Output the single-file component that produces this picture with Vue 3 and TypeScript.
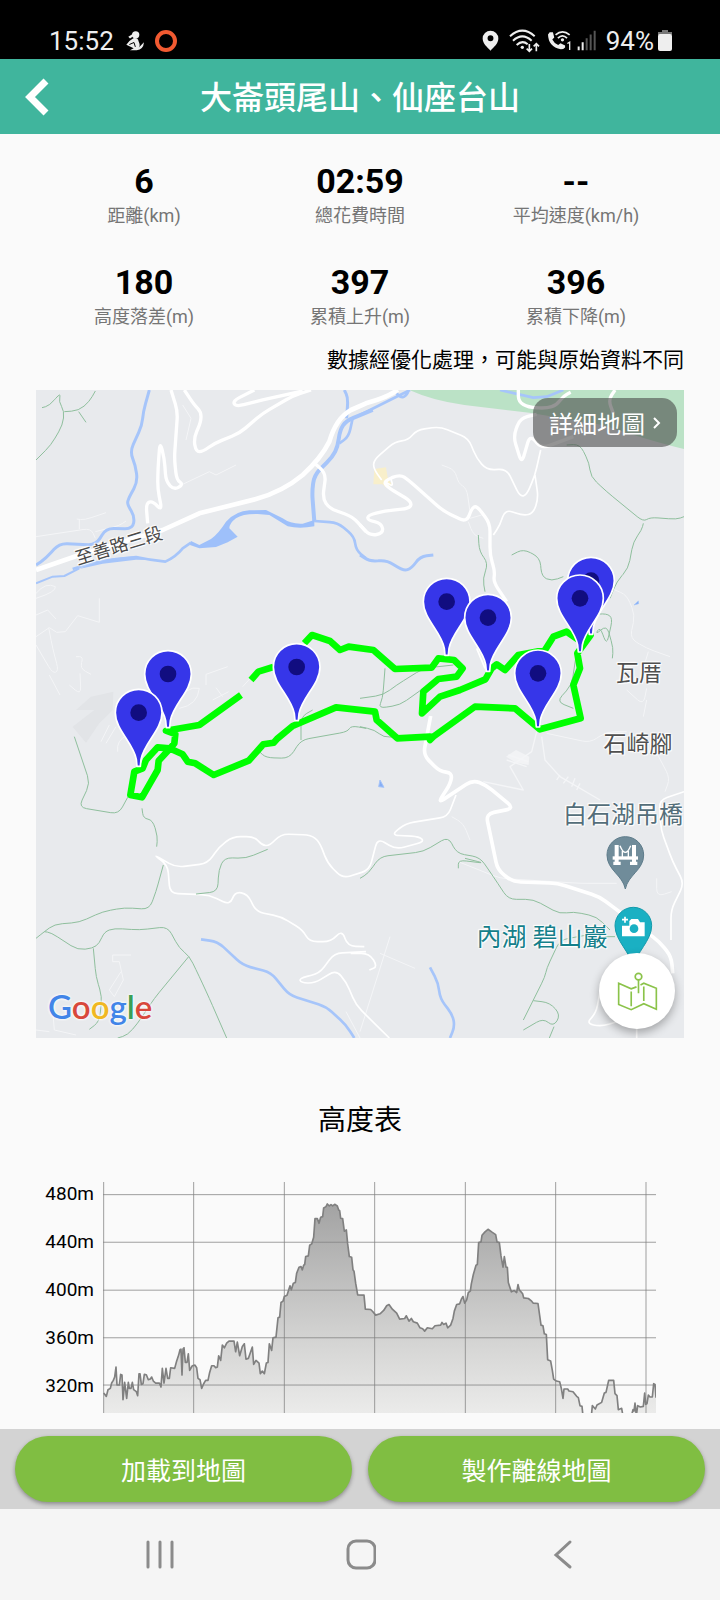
<script setup lang="ts">
interface Stat {
  value: string
  label: string
}

interface PlaceLabel {
  text: string
  x: number
  y: number
  kind: string
}

type Point = [number, number]

const stats: Stat[] = [
  { value: '6', label: '距離(km)' },
  { value: '02:59', label: '總花費時間' },
  { value: '--', label: '平均速度(km/h)' },
  { value: '180', label: '高度落差(m)' },
  { value: '397', label: '累積上升(m)' },
  { value: '396', label: '累積下降(m)' },
]

/* Map positions are given on a 648 x 648 tile. */
const tileSize = 648
const places: PlaceLabel[] = [
  { text: '至善路三段', x: 83, y: 156, kind: 'road' },
  { text: '瓦厝', x: 603, y: 284, kind: 'village' },
  { text: '石崎腳', x: 602, y: 355, kind: 'village' },
  { text: '白石湖吊橋', x: 587, y: 425, kind: 'bridge' },
  { text: '內湖 碧山巖', x: 506, y: 548, kind: 'temple' },
]

const percent = (value: number): string => `${(value / tileSize) * 100}%`

/* Rounds the corners of every M/L/H/V polyline in a path; curves and closed shapes stay as they are. */
const smooth = (d: string, radius = 24): string =>
  (d.match(/M[^M]*/g) ?? []).map((part) => {
    if (/[QZ]/.test(part)) return part
    const points: Point[] = []
    for (const step of part.match(/[MLHV][^MLHV]*/g) ?? []) {
      const numbers = (step.match(/-?\d+/g) ?? []).map(Number)
      const last = points[points.length - 1]
      if (step[0] === 'H') points.push([numbers[0], last[1]])
      else if (step[0] === 'V') points.push([last[0], numbers[0]])
      else for (let i = 0; i + 1 < numbers.length; i += 2) points.push([numbers[i], numbers[i + 1]])
    }
    const towards = (a: Point, b: Point): string => {
      const length = Math.hypot(b[0] - a[0], b[1] - a[1]) || 1
      const t = Math.min(radius / length, 0.5)
      return `${a[0] + (b[0] - a[0]) * t} ${a[1] + (b[1] - a[1]) * t}`
    }
    const inner = points.slice(1, -1).map((p, i) => `L${towards(p, points[i])}Q${p[0]} ${p[1]} ${towards(p, points[i + 2])}`)
    return `M${points[0].join(' ')}${inner.join('')}L${points[points.length - 1].join(' ')}`
  }).join('')

/* Waypoint pins, in map units, from back to front. */
const pins: Point[] = [
  [1665, 572],
  [1632, 625],
  [1232, 635],
  [1356, 683],
  [1506, 850],
  [396, 852],
  [308, 968],
  [782, 831],
]

const brand = [
  { letter: 'G', tone: 'blue' },
  { letter: 'o', tone: 'red' },
  { letter: 'o', tone: 'yellow' },
  { letter: 'g', tone: 'blue' },
  { letter: 'l', tone: 'green' },
  { letter: 'e', tone: 'red' },
]

const heights: string[] = ['480m', '440m', '400m', '360m', '320m']
const gridRows: number[] = [38, 181, 325, 468, 610]
const gridColumns: number[] = [2, 272, 544, 815, 1087, 1358, 1629]

const firstHalf: Point[] = [
  [221, 910], [229, 920], [234, 900], [241, 896], [245, 880], [250, 872], [254, 862], [258, 832], [261, 886], [268, 886],
  [272, 854], [276, 856], [279, 930], [284, 878], [290, 926], [295, 878], [298, 896], [303, 896], [307, 878], [311, 900],
  [319, 906], [323, 918], [327, 852], [330, 852], [334, 884], [339, 882], [343, 854], [349, 855], [355, 870], [361, 868],
  [365, 862], [370, 874], [377, 880], [388, 880], [393, 892], [397, 836], [402, 880], [408, 836], [413, 866], [418, 866],
  [422, 834], [434, 836], [440, 814], [446, 796], [450, 780], [453, 778], [456, 856], [459, 778], [462, 774], [466, 818],
  [471, 818], [475, 792], [479, 842], [487, 828], [495, 826], [500, 834], [504, 866], [510, 870], [515, 896], [521, 882],
  [527, 872], [534, 872], [539, 848], [545, 828], [552, 828], [557, 834], [562, 832], [566, 798], [572, 812], [577, 766],
  [583, 774], [590, 760], [597, 754], [612, 754], [617, 786], [622, 757], [629, 798], [637, 770], [643, 762], [648, 808],
  [655, 806], [667, 772], [671, 824], [678, 812], [687, 820], [691, 852], [697, 844], [703, 852], [709, 820], [714, 818],
  [718, 762], [725, 782], [729, 744], [738, 742], [744, 684], [749, 682], [753, 638], [759, 634], [763, 620], [771, 616],
  [780, 588], [784, 600], [790, 580], [796, 578], [800, 550], [807, 532], [813, 530], [817, 540], [821, 526], [824, 524],
  [827, 500], [835, 498], [839, 466], [845, 462], [851, 442], [855, 386], [862, 386], [867, 400], [872, 382], [878, 380],
  [881, 354], [888, 350], [892, 342], [898, 348], [903, 344], [908, 348], [914, 343], [922, 348], [926, 360], [929, 362],
  [932, 385], [938, 386], [943, 424], [949, 420], [953, 462], [958, 500], [965, 502], [969, 540], [972, 544], [977, 580],
]

const secondHalf: Point[] = [
  [23, 375], [42, 376], [46, 418], [62, 419], [68, 425], [77, 436], [90, 432], [101, 422], [110, 408], [117, 404],
  [127, 418], [140, 430], [149, 448], [164, 446], [169, 438], [177, 454], [184, 446], [190, 456], [202, 460], [210, 474],
  [218, 477], [224, 484], [232, 474], [247, 477], [255, 468], [272, 466], [276, 458], [281, 464], [288, 460], [293, 474],
  [302, 466], [309, 446], [313, 424], [320, 404], [329, 402], [334, 388], [339, 380], [344, 400], [350, 390], [355, 368],
  [361, 364], [364, 342], [370, 314], [378, 286], [382, 284], [386, 218], [393, 216], [396, 196], [405, 186], [414, 178],
  [425, 186], [437, 194], [441, 216], [448, 218], [453, 258], [459, 292], [463, 260], [468, 292], [472, 292], [475, 338],
  [484, 366], [493, 362], [500, 368], [504, 344], [508, 360], [518, 372], [521, 384], [535, 386], [545, 394], [550, 400],
  [564, 401], [573, 466], [579, 468], [583, 492], [589, 494], [593, 570], [602, 574], [607, 602], [611, 628], [619, 634],
  [629, 636], [634, 656], [639, 686], [642, 658], [653, 658], [657, 664], [669, 666], [680, 680], [685, 684], [690, 708],
  [696, 710], [699, 740], [724, 740], [727, 708], [736, 718], [741, 706], [755, 698], [763, 670], [768, 668], [776, 632],
  [791, 632], [795, 672], [801, 678], [805, 720], [815, 716], [819, 740], [844, 740], [849, 720], [852, 724], [855, 700],
  [859, 738], [863, 708], [871, 712], [880, 710], [884, 670], [887, 704], [891, 702], [895, 676], [900, 682], [907, 682],
  [911, 642], [915, 644], [918, 684],
]

const profile: Point[] = [
  ...firstHalf.map(([x, y]): Point => [x - 219, y - 276]),
  ...secondHalf.map(([x, y]): Point => [x + 741, y - 36]),
]
const profileLine = 'M' + profile.map(([x, y]) => `${x} ${y}`).join('L')
const profileArea = `${profileLine}V720H2Z`
</script>

<template>
  <div class="screen" lang="zh-Hant">
    <div class="status">
      <div class="status-group">
        <span>15:52</span>
        <svg class="figure" viewBox="376 90 54 62" aria-hidden="true">
          <g fill="#eee" stroke="none">
            <circle cx="405" cy="104" r="11" />
            <path d="M398 114 Q412 112 414 124 Q420 136 414 143 L424 132 L430 126 Q428 148 408 150 L388 150 L399 144 L377 134 Q386 120 398 114Z" />
            <path d="M383 110 L397 101 L400 107 L388 115Z" />
          </g>
          <path d="M386 133 L400 127 L404 140" fill="none" stroke="#000" stroke-width="3" />
        </svg>
        <svg class="ring" viewBox="0 0 24 24" aria-hidden="true">
          <circle cx="12" cy="12" r="9" fill="none" stroke="#f15a31" stroke-width="4" />
        </svg>
      </div>
      <div class="status-group">
        <svg class="place" viewBox="366 90 52 64" aria-hidden="true">
          <path fill-rule="evenodd" fill="#eee" d="M392 92 A24 24 0 0 1 416 116 C416 132 402 142 392 153 C382 142 368 132 368 116 A24 24 0 0 1 392 92Z M392 106 A9 9 0 1 0 392 124 A9 9 0 1 0 392 106Z" />
        </svg>
        <svg class="wifi" viewBox="446 84 93 72" fill="none" stroke="#eee" stroke-width="6" aria-hidden="true">
          <path d="M449 106 Q486 72 523 106 M458 119 Q486 93 514 119 M469 132 Q486 116 502 130" />
          <circle cx="486" cy="139" r="5" fill="#eee" stroke="none" />
          <path stroke-width="5" d="M507 129V151M499 143L507 151L515 143M528 151V129M520 136L528 128L536 136" />
        </svg>
        <svg class="call" viewBox="558 90 76 64" fill="none" stroke="#eee" aria-hidden="true">
          <path fill="#eee" stroke="none" d="M566 97 L576 97 L580 113 L574 119 Q580 131 592 136 L599 130 L613 137 L613 143 Q608 149 600 149 Q562 142 561 104Z" />
          <path stroke-width="5" d="M584 105 Q605 86 627 105 M591 115 Q605 101 619 115" />
          <circle cx="605" cy="120" r="5" fill="#eee" stroke="none" />
          <path stroke-width="4" d="M620 131L627 127V151" />
        </svg>
        <svg class="signal" viewBox="650 90 60 62" aria-hidden="true">
          <path stroke="#eee" stroke-width="6" d="M655 150V139M667 150V126" />
          <path stroke="#555" stroke-width="6" d="M679 150V114M691 150V103M703 150V92" />
        </svg>
        <span class="charge">94%</span>
        <svg class="battery" viewBox="0 0 14 21" aria-hidden="true">
          <path fill="#777" d="M4 0H10V2H14V5H0V2H4Z" />
          <rect y="4" width="14" height="17" rx="2" fill="#eee" />
        </svg>
      </div>
    </div>

    <header class="bar">
      <button class="back" type="button" aria-label="返回">
        <svg viewBox="0 0 24 38" aria-hidden="true">
          <path d="M21 3L5 19L21 35" fill="none" stroke="#fff" stroke-width="7" />
        </svg>
      </button>
      <h1>大崙頭尾山、仙座台山</h1>
    </header>

    <main>
      <dl class="stats">
        <div v-for="stat in stats" :key="stat.label" class="stat">
          <dt>{{ stat.label }}</dt>
          <dd>{{ stat.value }}</dd>
        </div>
      </dl>
      <p class="note">數據經優化處理，可能與原始資料不同</p>

      <section class="map" aria-label="路線地圖">
        <svg class="tile" viewBox="0 0 1944 1944" aria-hidden="true">
          <rect width="1944" height="1944" fill="#e8eaed" />
          <path d="M1120 0 Q1190 32 1285 45 L1480 68 L1700 105 Q1850 155 1944 177 V0Z" fill="#bbe2c6" />

          <!-- buildings and quarries -->
          <path d="M120 960 L165 920 L232 905 L230 960 L190 1000 L150 1058 L110 1010 L175 960Z" fill="#e2e4e7" />
          <path d="M1015 237 L1050 232 L1055 262 L1068 285 L1050 293 L1040 283 L1012 283Z" fill="#f8efcb" />
          <path d="M1410 1100L1440 1080L1480 1100L1478 1125L1440 1118Z" fill="#f2f3f5" />

          <!-- minor lanes -->
          <g class="lanes">
            <g transform="translate(0,-15)">
              <path :d="smooth('M0 455L165 430L178 460M122 402L145 405L210 383M130 402V432M178 440L250 422L270 408')" />
              <path d="M0 640Q62 620 58 605Q30 590 0 625M0 690L35 675L60 702M0 755L40 728L62 742L88 740L125 692L190 712V640" />
              <path :d="smooth('M38 728L50 790L68 858L50 865L0 780M72 930L40 870M120 815L142 815L132 850L165 868M132 865L135 930L100 900')" />
              <path d="M440 298L520 260L540 270L600 240M440 60L465 100L450 165M510 900V868L575 845M530 945L578 920M540 908L560 935M620 905L650 872M430 970Q485 960 490 910Q450 900 420 960" />
            </g>
            <g transform="translate(972,-15)">
              <path :d="smooth('M245 240L285 255L295 295L320 310L330 380M330 400L365 390M325 410L340 450L370 460')" />
              <path :d="smooth('M765 615L800 630L825 690L810 760L860 790L930 815M865 800L850 850M860 910L850 960L800 915')" />
            </g>
            <g transform="translate(972,960)">
              <path d="M530 65L515 125L450 170L490 240L370 215M545 80L555 150L600 200L720 270M590 210L600 195M610 220L625 200M635 230L645 205M650 240L660 220M440 150L500 170M445 135L505 155" stroke-width="4" />
              <path :d="smooth('M560 70L690 98L740 65L800 65M870 90L930 205L915 245M850 20L860 -30M330 390L310 340L275 320M295 455L420 505L660 520L770 520M60 730L165 775M0 965L90 680M890 505V560L935 545')" />
            </g>
            <g transform="translate(0,960)">
              <path d="M285 735H230V755H250L262 810L235 860L220 840L255 785M50 900L55 960L120 975M0 960L40 965M930 905L972 984M245 125Q240 90 275 75M210 100L240 50M195 95L220 45" />
            </g>
          </g>

          <!-- streams -->
          <g class="water">
            <g transform="translate(0,-15)">
              <path :d="smooth('M340 15L322 80L318 120L282 200L298 240L305 290L275 345V360L296 395L290 432L210 430L180 480L70 475L30 520L0 540')" stroke-width="9" />
              <path :d="smooth('M925 15L936 38L932 100')" stroke-width="9" />
              <path :d="smooth('M1010 75L930 108L912 135L905 185L890 215L835 270L828 320L835 410')" stroke-width="12" />
              <path :d="smooth('M835 408L905 413L955 455L960 495L990 520M950 100L938 155L910 175')" stroke-width="8" />
              <path d="M0 595L50 575L85 573L130 550" stroke-width="6" />
              <path d="M110 552Q160 535 220 526L300 516Q340 525 388 530Q420 515 440 490L465 473" stroke-width="8" />
              <path d="M130 552L180 530Q240 515 300 514L350 525L300 524L200 536Z" fill="#a6c5fa" stroke="none" />
              <path d="M465 468L490 480L525 462Q548 445 570 410Q600 378 640 376L690 375L740 400Q765 418 800 416L835 405V424Q790 432 755 424L700 390L665 387Q620 386 600 400Q580 415 580 430L605 455L575 472L540 486L490 490L462 480Z" fill="#9ec0fa" stroke="none" />
            </g>
            <g transform="translate(972,-15)">
              <path d="M0 90L90 45L150 15M110 25Q130 50 145 20M420 15L520 38L560 35L610 15" stroke-width="8" />
              <path :d="smooth('M0 510L30 530L80 525L130 558L155 550L180 515L220 510')" stroke-width="9" />
              <path d="M822 660L835 648L836 656Z" fill="#7fabf5" stroke-width="2" />
            </g>
            <path :d="smooth('M495 1648L545 1655L620 1725L705 1748L760 1815L870 1850L930 1905L955 1944')" stroke-width="8" />
            <path :d="smooth('M1182 1732L1207 1780L1212 1825L1250 1875L1256 1910L1242 1944')" stroke-width="8" />
            <path d="M1028 1190L1032 1170L1044 1192Z" fill="#86aef5" stroke-width="3" />
          </g>

          <!-- roads -->
          <g class="roads">
            <g transform="translate(0,-15)">
              <path d="M0 555L130 510L380 435L490 385L660 342Q740 320 800 270Q855 220 880 170Q900 100 945 75L990 55Q1060 35 1085 14" stroke-width="14" />
              <path :d="smooth('M405 15L425 80L415 220L422 285L442 298L415 315L390 290L385 220L372 170L366 250L365 310L378 378L350 348L330 355L335 415')" />
              <path :d="smooth('M445 15L475 60L495 80V110L473 160L480 200L500 200L535 175L610 145L680 85L770 33L825 15M655 15L590 48L600 65L680 45L800 18M832 232L870 265L860 340L880 370L950 395L990 440')" />
            </g>
            <g transform="translate(972,-15)">
              <path :d="smooth('M475 15V50L505 67L560 70L590 60L610 33L632 22M530 88L480 100L460 155L485 235L510 150L545 190L640 155M765 15L745 45L760 85')" />
              <path :d="smooth('M0 420L30 452L70 445L65 415L22 405L25 390L75 378L150 370L155 350L80 305L72 288L120 268L145 285L250 378L320 412L335 370L350 362L390 415V510L405 560L400 590L440 650')" stroke-width="10" />
              <path :d="smooth('M75 290L100 305L92 280M65 285L40 250L42 225L105 170L145 165L170 135L240 125L325 160L350 220L380 255L440 252L480 335L500 330L525 270L542 195M525 270L535 340L520 385L490 392L435 373L420 420L400 450M350 790L375 850')" stroke-width="5" />
            </g>
            <path :d="smooth('M1184 978L1162 1095L1212 1145L1248 1148L1244 1180L1205 1240L1310 1170L1350 1185L1434 1255L1350 1272L1385 1440L1430 1475L1565 1480L1690 1520L1750 1565L1870 1655L1906 1700L1910 1750')" stroke-width="11" />
            <path :d="smooth('M1260 1215L1235 1280L1110 1300L1065 1335L1150 1340L1165 1355L1080 1378L1025 1345L1000 1440L920 1465L875 1420L850 1355L825 1335L735 1332L700 1368L678 1365L655 1340H590L550 1370L515 1420L420 1432L350 1392L395 1425L402 1510L520 1515L582 1545L597 1505L635 1512L660 1565L735 1580L800 1620L820 1655L885 1655L918 1620L935 1668L985 1670')" stroke-width="5" />
            <path :d="smooth('M990 1685L895 1690L850 1750L790 1765L795 1778L835 1780L900 1740L930 1775L960 1845L1005 1890L1060 1944')" stroke-width="5" />
            <path :d="smooth('M944 1690L1000 1690L1025 1730L1000 1740M1944 1205L1870 1230L1875 1320L1910 1415L1944 1480L1905 1560V1650M1695 1790L1680 1870L1650 1900L1695 1910L1760 1890M1802 1910V1944')" stroke-width="5" />
          </g>

          <!-- hiking trails -->
          <g class="trails">
            <g transform="translate(0,-15)">
              <path :d="smooth('M18 68L40 62L75 22L68 50L85 78L80 120L45 180L0 225M85 80L128 77L160 50L178 18M128 80L150 112')" />
            </g>
            <g transform="translate(972,-15)">
              <path :d="smooth('M620 180L660 178L688 235L692 275L740 320L850 410L870 397L950 403L972 395M850 415L845 435L820 470L805 550L770 590L750 640M355 450L358 500L385 535L368 580L375 620M455 510L490 492L540 518L545 575L575 588L610 575')" />
              <path :d="smooth('M690 690L740 685L758 700L740 780L720 725L705 750L740 720L760 790L757 820M0 940L70 930L110 900L190 850L280 840M75 850L68 940L55 970L120 960L190 910M650 800L635 900L590 950L640 970')" />
            </g>
            <g transform="translate(0,960)">
              <path :d="smooth('M115 80L162 220L128 292L248 312L275 262M320 175L345 140L365 125M318 295L322 325L350 330L365 380L362 410M382 465L360 545L340 598L265 593L200 605L130 637L55 643L25 665L0 685M25 665L45 668L125 720L170 715L190 700L205 665L235 655L310 660L395 650L430 715L460 738L490 800L520 865L572 984')" />
              <path :d="smooth('M458 740L355 865L305 940L275 975L245 984M172 715L180 800L198 860L190 935L160 958M480 552L545 545L548 480L565 443L630 445L695 418M670 125L690 143L760 145L795 90L935 65L945 47L990 55M795 90V20L830 0')" />
            </g>
            <g transform="translate(972,960)">
              <path :d="smooth('M0 50L45 60L70 82L110 80M0 505L25 490L60 440L190 425L265 380L290 430L360 442L400 500L445 568L520 568L600 612L640 605L710 620L750 660M315 445L375 460L295 450V475M735 665L600 690L560 775L555 800L490 930M520 872L570 878L602 915L580 950L550 925L490 960M568 984L582 950M730 680H765')" />
            </g>
          </g>

          <!-- recorded track -->
          <g class="track">
            <path d="M805 760L828 735L882 753L912 780L938 770L1012 780L1077 837L1187 833L1207 805L1254 810L1280 835L1262 860L1207 867L1162 905L1158 970L1212 920L1272 900L1348 868L1367 835L1382 823L1407 840L1447 795L1527 780L1552 740L1592 725L1628 750L1664 735L1624 790L1632 835L1612 885L1634 985L1512 1018L1437 955L1317 950L1192 1040L1182 1050V1040L1084 1045L1022 990L1017 965L900 952L770 1008L725 1045L713 1058L682 1063L638 1112L533 1155L478 1120L455 1115L440 1093L400 1075L365 1072L330 1110L320 1135L295 1145L283 1215L318 1222L345 1175L365 1140L368 1112L400 1078L415 1060L418 1032L390 1022L490 1005L615 915" />
            <path d="M645 870L667 845L712 831" />
          </g>

          <!-- place markers -->
          <g transform="translate(1768,1395)">
            <path d="M0 102C-8 60 -55 45 -55 0A55 55 0 1 1 55 0C55 45 8 60 0 102Z" fill="#708c9a" stroke="#5e7c8b" stroke-width="3" />
            <path d="M-26 -30V30M26 -30V30" stroke="#fff" stroke-width="12" />
            <path d="M-38 9H38" stroke="#fff" stroke-width="10" />
            <path d="M-16 -28Q0 12 16 -28M-9 -12V8M9 -12V8" fill="none" stroke="#fff" stroke-width="4" />
            <path d="M-36 20H-14V30H-36ZM14 20H36V30H14Z" fill="#fff" />
          </g>
          <g transform="translate(1792,1607)">
            <path d="M0 125C-8 80 -55 45 -55 0A55 55 0 1 1 55 0C55 45 8 80 0 125Z" fill="#1ab0c3" stroke="#139aab" stroke-width="3" />
            <path d="M-34 0H-12V-14L-6 -20H14L20 -10H34V32H-34Z" fill="#fff" />
            <circle cx="2" cy="9" r="13" fill="#1ab0c3" />
            <path d="M-25 -27V-9M-34 -18H-16" stroke="#fff" stroke-width="5" />
          </g>

          <!-- waypoint pins -->
          <g v-for="[x, y] in pins" :key="`${x}-${y}`" :transform="`translate(${x},${y})`">
            <path d="M-5 161L-7 140C-16 90 -70 52 -70 0A70 70 0 1 1 70 0C70 52 16 90 7 140L5 161Z" fill="#3636e9" stroke="#fff" stroke-width="5" />
            <circle r="25" fill="#110d80" />
          </g>
        </svg>

        <span
          v-for="place in places"
          :key="place.text"
          class="place-label"
          :class="place.kind"
          :style="{ left: percent(place.x), top: percent(place.y) }"
        >{{ place.text }}</span>

        <span class="brand"><span v-for="(part, i) in brand" :key="i" :class="part.tone">{{ part.letter }}</span></span>

        <button class="detail" type="button">
          詳細地圖
          <svg viewBox="0 0 8 12" aria-hidden="true">
            <path d="M1 1L6 6L1 11" fill="none" stroke="#fff" stroke-width="2" />
          </svg>
        </button>

        <button class="layers" type="button" aria-label="地圖圖層">
          <svg viewBox="770 784 122 118" fill="none" stroke="#8bc34a" stroke-width="5" aria-hidden="true">
            <circle cx="834" cy="798" r="10" />
            <path d="M834 808V848M828 829L812 835L774 818V882L812 898L850 880L888 897V833L850 818L840 823M812 843V888M850 828V872" />
          </svg>
        </button>
      </section>

      <section class="elevation">
        <h2>高度表</h2>
        <div class="chart">
          <div class="axis">
            <span v-for="height in heights" :key="height">{{ height }}</span>
          </div>
          <svg class="plot" viewBox="0 0 1659 694" preserveAspectRatio="none" role="img" aria-label="高度剖面圖">
            <defs>
              <linearGradient id="slope" x1="0" y1="60" x2="0" y2="694" gradientUnits="userSpaceOnUse">
                <stop offset="0" stop-color="#a2a2a2" />
                <stop offset="0.6" stop-color="#d0d0cf" />
                <stop offset="1" stop-color="#ebebea" />
              </linearGradient>
            </defs>
            <path :d="profileArea" fill="url(#slope)" />
            <g stroke="#808080" stroke-opacity="0.75" stroke-width="3">
              <line v-for="y in gridRows" :key="`r${y}`" x1="0" x2="1659" :y1="y" :y2="y" />
              <line v-for="x in gridColumns" :key="`c${x}`" :x1="x" :x2="x" y1="0" y2="694" />
            </g>
            <path :d="profileLine" fill="none" stroke="#808080" stroke-width="5" stroke-linejoin="round" />
          </svg>
        </div>
      </section>
    </main>

    <div class="actions">
      <button type="button">加載到地圖</button>
      <button type="button">製作離線地圖</button>
    </div>

    <nav class="system">
      <button type="button" aria-label="最近使用">
        <svg viewBox="0 0 30 32" aria-hidden="true">
          <path d="M3 3V28M15 3V28M27 3V28" stroke="#8b8b8b" stroke-width="3" stroke-linecap="round" />
        </svg>
      </button>
      <button type="button" aria-label="主畫面">
        <svg viewBox="0 0 30 32" aria-hidden="true">
          <rect x="2" y="2" width="27" height="27" rx="8" fill="none" stroke="#8b8b8b" stroke-width="3" />
        </svg>
      </button>
      <button type="button" aria-label="上一頁">
        <svg viewBox="0 0 30 32" aria-hidden="true">
          <path d="M23 3L9 16L23 28" fill="none" stroke="#8b8b8b" stroke-width="3" stroke-linecap="round" />
        </svg>
      </button>
    </nav>
  </div>
</template>

<style>
body {
  margin: 0;
  background: #fafafa;
}
</style>

<style scoped>
.screen {
  display: flex;
  flex-direction: column;
  min-height: 100vh;
  background: #fafafa;
  color: #000;
  font-family: Roboto, "Noto Sans CJK TC", sans-serif;
}

button {
  border: 0;
  padding: 0;
  background: none;
  color: inherit;
  font: inherit;
  cursor: pointer;
}

svg {
  display: block;
  flex: none;
}

.status {
  display: flex;
  justify-content: space-between;
  box-sizing: border-box;
  height: 59px;
  padding: 22px 48px 0 49px;
  background: #000;
  color: #eee;
  font-size: 26px;
  line-height: 36px;
}

.status-group {
  display: flex;
  align-items: center;
}

.figure {
  width: 18px;
  height: 21px;
  margin-left: 12px;
}

.ring {
  width: 24px;
  height: 24px;
  margin-left: 10px;
}

.place {
  width: 17px;
  height: 21px;
}

.wifi {
  width: 31px;
  height: 24px;
  margin-left: 10px;
}

.call {
  width: 25px;
  height: 21px;
  margin-left: 7px;
}

.signal {
  width: 20px;
  height: 21px;
  margin-left: 5px;
}

.charge {
  margin-left: 9px;
}

.battery {
  width: 14px;
  height: 21px;
  margin-left: 4px;
}

.bar {
  display: grid;
  grid-template-columns: 74px 1fr 74px;
  align-items: center;
  height: 75px;
  background: #40b59d;
  color: #fff;
}

.back {
  display: grid;
  place-items: center;
  height: 75px;
}

.back svg {
  width: 24px;
  height: 38px;
}

h1 {
  margin: 0;
  padding-top: 2px;
  font-size: 32px;
  line-height: 48px;
  font-weight: 500;
  text-align: center;
}

main {
  flex: 1;
}

.stats {
  display: grid;
  grid-template-columns: repeat(3, 1fr);
  row-gap: 31px;
  margin: 0;
  padding: 26px 36px 0;
}

.stat {
  display: flex;
  flex-direction: column-reverse;
  text-align: center;
}

.stat dt {
  color: #757575;
  font-size: 18px;
  line-height: 28px;
}

.stat dd {
  margin: 0;
  font-size: 34px;
  line-height: 42px;
  font-weight: 700;
}

.note {
  margin: 14px 36px 15px;
  font-size: 21px;
  line-height: 30px;
  text-align: right;
}

.map {
  position: relative;
  margin: 0 36px;
  overflow: hidden;
}

.tile {
  width: 100%;
  height: auto;
}

.tile path {
  stroke-linejoin: round;
}

.lanes {
  fill: none;
  stroke: #f4f5f7;
  stroke-width: 3;
}

.water {
  fill: none;
  stroke: #a6c5fa;
}

.roads {
  fill: none;
  stroke: #fff;
  stroke-width: 10;
}

.trails {
  fill: none;
  stroke: #8fbf9d;
  stroke-width: 3;
}

.track {
  fill: none;
  stroke: #0f0;
  stroke-width: 20;
}

.place-label {
  position: absolute;
  transform: translate(-50%, -50%);
  white-space: nowrap;
  text-shadow: 0 0 2px #fff, 0 0 2px #fff, 0 0 3px #fff, 1px 1px 1px #fff, -1px -1px 1px #fff;
}

.road {
  transform: translate(-50%, -50%) rotate(-17deg);
  color: #4a4a4a;
  font-size: 18px;
  line-height: 24px;
}

.village {
  color: #505050;
  font-size: 23px;
  line-height: 30px;
}

.bridge {
  color: #546e7a;
  font-size: 24px;
  line-height: 30px;
}

.temple {
  color: #157f8a;
  font-size: 25px;
  line-height: 30px;
}

.brand {
  position: absolute;
  left: 12px;
  bottom: 12px;
  font-family: Lato, sans-serif;
  font-size: 33px;
  line-height: 40px;
  font-weight: 600;
  text-shadow: 0 0 3px #fff, 0 0 3px #fff;
}

.blue {
  color: #4285e8;
}

.red {
  color: #d8483c;
}

.yellow {
  color: #f0b822;
}

.green {
  color: #3b9f55;
}

.detail {
  position: absolute;
  top: 8px;
  right: 7px;
  display: flex;
  align-items: center;
  justify-content: center;
  gap: 8px;
  width: 144px;
  height: 49px;
  border-radius: 15px;
  background: rgba(70, 70, 70, 0.58);
  color: #fff;
  font-size: 24px;
}

.detail svg {
  width: 8px;
  height: 12px;
}

.layers {
  position: absolute;
  right: 9px;
  bottom: 9px;
  display: grid;
  place-items: center;
  width: 76px;
  height: 76px;
  border-radius: 50%;
  background: #fff;
  box-shadow: 0 4px 10px rgba(0, 0, 0, 0.3);
}

.layers svg {
  width: 41px;
  height: 39px;
}

h2 {
  margin: 63px 0 41px;
  font-size: 28px;
  line-height: 40px;
  font-weight: 400;
  text-align: center;
}

.chart {
  display: flex;
  margin: 0 64px 15px 36px;
}

.axis {
  display: flex;
  flex-direction: column;
  width: 67px;
  margin-top: -12px;
}

.axis span {
  height: 48px;
  padding-right: 9px;
  font-size: 19px;
  line-height: 48px;
  text-align: right;
}

.plot {
  flex: 1;
  min-width: 0;
  height: 231px;
}

.actions {
  display: grid;
  grid-template-columns: 1fr 1fr;
  gap: 16px;
  padding: 7px 15px;
  background: #d3d3d3;
}

.actions button {
  height: 66px;
  border-radius: 33px;
  background: #80be42;
  box-shadow: 0 2px 4px rgba(0, 0, 0, 0.35);
  color: #fff;
  font-size: 25px;
}

.system {
  display: grid;
  grid-template-columns: repeat(3, 1fr);
  height: 91px;
  padding: 0 57px 0 59px;
  background: #f5f5f5;
}

.system button {
  display: grid;
  place-items: center;
}

.system svg {
  width: 30px;
  height: 32px;
}
</style>
